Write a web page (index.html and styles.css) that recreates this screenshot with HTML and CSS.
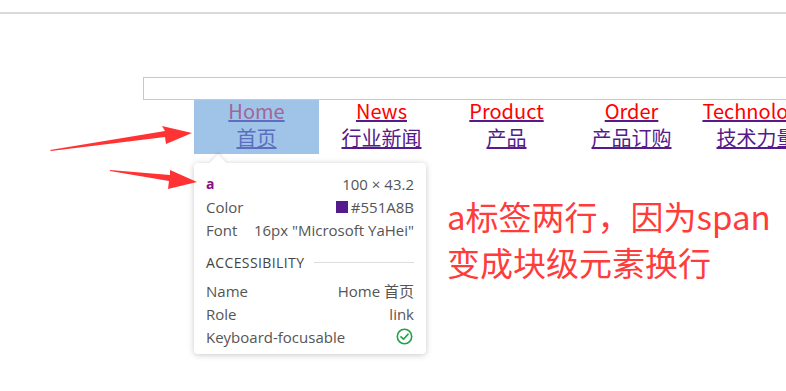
FILE: index.html
```html
<!DOCTYPE html>
<html lang="zh-CN">
<head>
    <meta charset="UTF-8">
    <meta name="viewport" content="width=device-width, initial-scale=1.0">
    <title>nav</title>
    <link rel="stylesheet" href="styles.css">
</head>
<body>
    <div class="topline"></div>

    <div class="page">
        <div class="searchbar"></div>
        <ul class="nav">
            <li class="picked"><a href="#"><span>Home</span>首页</a></li>
            <li><a href="#"><span>News</span>行业新闻</a></li>
            <li><a href="#"><span>Product</span>产品</a></li>
            <li><a href="#"><span>Order</span>产品订购</a></li>
            <li><a href="#"><span>Technology</span>技术力量</a></li>
        </ul>
    </div>

    <!-- devtools inspect tooltip -->
    <div class="tip">
        <div class="row head">
            <b class="tag">a</b>
            <span>100 × 43.2</span>
        </div>
        <div class="row">
            <span>Color</span>
            <span class="val"><i class="swatch"></i>#551A8B</span>
        </div>
        <div class="row">
            <span>Font</span>
            <span>16px "Microsoft YaHei"</span>
        </div>
        <div class="row section">
            <span>ACCESSIBILITY</span>
            <i class="rule"></i>
        </div>
        <div class="row">
            <span>Name</span>
            <span>Home 首页</span>
        </div>
        <div class="row">
            <span>Role</span>
            <span>link</span>
        </div>
        <div class="row">
            <span>Keyboard-focusable</span>
            <svg class="ok" width="17" height="17" viewBox="0 0 17 17">
                <circle cx="8.5" cy="8.5" r="7.2" fill="none" stroke="#1ea446" stroke-width="1.6"/>
                <path d="M5 8.8 L7.5 11.2 L12 6.2" fill="none" stroke="#1ea446" stroke-width="1.7" stroke-linecap="round" stroke-linejoin="round"/>
            </svg>
        </div>
    </div>

    <div class="note">a标签两行，因为span<br>变成块级元素换行</div>

    <svg class="arrows" width="220" height="200" viewBox="0 0 220 200">
        <polygon points="50,150 165,131 162,126 192,133 166,144 165,137 51,151" fill="#f33"/>
        <polygon points="110,170 170,175 170,170 197,182 168,189 169,181 110,171" fill="#f33"/>
    </svg>
</body>
</html>
```

FILE: styles.css
```css
body {
    margin: 0;
    padding: 0;
    background-color: #fff;
    font-family: "Noto Sans CJK SC", sans-serif;
    width: 786px;
    height: 391px;
    overflow: hidden;
}

.topline {
    margin-top: 12px;
    height: 2px;
    background-color: #d9d9de;
}

.page {
    margin-top: 63px;
    padding-left: 143px;
}

.searchbar {
    height: 21px;
    width: 700px;
    border: 1px solid #c8c8c8;
}

.nav {
    list-style: none;
    margin: 0;
    padding: 0 0 0 51px;
    display: flex;
    white-space: nowrap;
}

.nav li {
    flex: 0 0 125px;
    padding-bottom: 3px;
    text-align: center;
    font-size: 20px;
    line-height: 27px;
}

.nav li.picked {
    background-color: #a0c4e8;
}

/* underline comes from the a, so it keeps the link colour */
.nav a {
    display: block;
    margin-top: -3px;
    color: #551a8b;
    text-decoration: underline;
}

.nav a span {
    display: block;
    color: #f00;
}

.nav li.picked a {
    color: #5a6fc0;
}

.nav li.picked a span {
    color: #a0669a;
}

.tip {
    position: absolute;
    left: 194px;
    top: 163px;
    width: 208px;
    padding: 9px 12px 6px;
    background-color: #fff;
    border-radius: 4px;
    box-shadow: 0 1px 6px rgba(0, 0, 0, 0.22);
    font-family: "Open Sans", "Noto Sans CJK SC", sans-serif;
    font-size: 15px;
    color: #555;
}

.tip::before {
    content: "";
    position: absolute;
    left: 18px;
    top: -6px;
    width: 12px;
    height: 12px;
    background-color: #fff;
    transform: rotate(45deg);
    box-shadow: -2px -2px 3px rgba(0, 0, 0, 0.08);
}

.row {
    position: relative;
    display: flex;
    justify-content: space-between;
    align-items: center;
    height: 23px;
}

.head .tag {
    color: #881280;
    font-size: 14px;
}

.val {
    display: flex;
    align-items: center;
}

.swatch {
    width: 12px;
    height: 12px;
    background-color: #551a8b;
    margin-right: 3px;
}

.section {
    margin-top: 10px;
    margin-bottom: 5px;
    font-size: 14px;
    letter-spacing: 0.4px;
    color: #444;
}

.rule {
    flex: 1;
    height: 1px;
    background-color: #ddd;
    margin-left: 10px;
}

.ok {
    display: block;
    margin-right: 1px;
}

.note {
    position: absolute;
    left: 447px;
    top: 193px;
    font-family: "Noto Sans CJK SC", sans-serif;
    font-size: 33px;
    line-height: 46px;
    color: #ff3b3b;
}

.arrows {
    position: absolute;
    left: 0;
    top: 0;
}
```
